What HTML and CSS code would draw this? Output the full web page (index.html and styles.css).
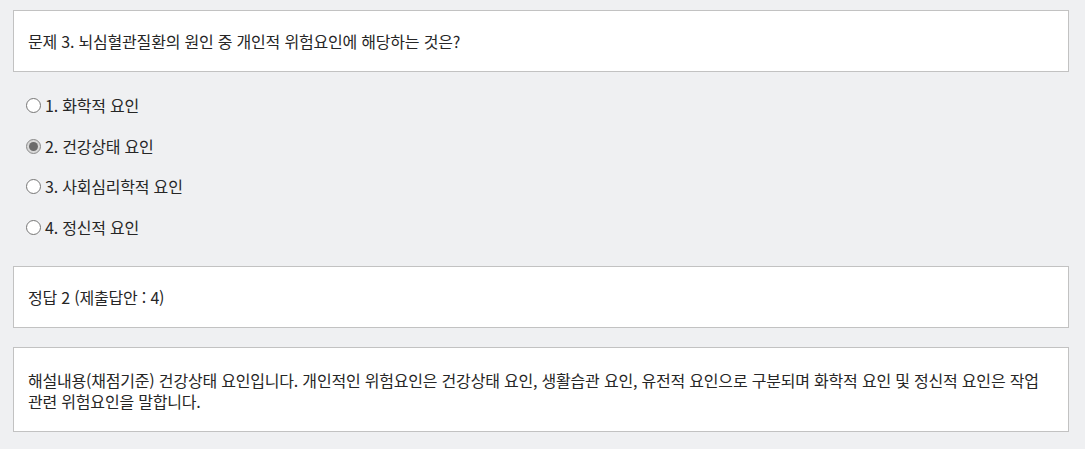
FILE: index.html
```html
<!DOCTYPE html>
<html lang="ko">

<head>
    <meta charset="UTF-8">
    <meta name="viewport" content="width=device-width, initial-scale=1.0">
    <title>문제 풀이 결과</title>
    <link rel="stylesheet" href="styles.css">
</head>

<body>
    <div class="quiz">
        <div class="box question">문제 3. 뇌심혈관질환의 원인 중 개인적 위험요인에 해당하는 것은?</div>

        <ul class="choices">
            <li class="choice"><span class="radio"></span>1. 화학적 요인</li>
            <li class="choice"><span class="radio checked"></span>2. 건강상태 요인</li>
            <li class="choice"><span class="radio"></span>3. 사회심리학적 요인</li>
            <li class="choice"><span class="radio"></span>4. 정신적 요인</li>
        </ul>

        <div class="box answer">정답 2 (제출답안 : 4)</div>

        <div class="box explain">해설내용(채점기준) 건강상태 요인입니다. 개인적인 위험요인은 건강상태 요인, 생활습관 요인, 유전적 요인으로 구분되며 화학적 요인 및 정신적 요인은 작업 관련 위험요인을 말합니다.</div>
    </div>
</body>

</html>
```

FILE: styles.css
```css
* {
    margin: 0;
    padding: 0;
    box-sizing: border-box;
}

body {
    background-color: #eff0f2;
    font-family: 'Noto Sans CJK KR', 'Noto Sans', sans-serif;
    font-size: 16px;
    color: #262626;
    letter-spacing: -0.2px;
}

.quiz {
    padding: 10px 16px 0 13px;
}

.box {
    background-color: #fff;
    border: 1px solid #c2c2c2;
    padding: 0 14px;
    line-height: 21px;
}

.question {
    padding-top: 20px;
    padding-bottom: 19px;
}

.choices {
    list-style: none;
    padding: 23px 0 28px 13px;
    display: flex;
    flex-direction: column;
    gap: 19.5px;
}

.choice {
    display: flex;
    align-items: center;
    gap: 4px;
    line-height: 21px;
}

.radio {
    width: 15px;
    height: 15px;
    border: 1px solid #767676;
    border-radius: 50%;
    background-color: #fff;
    display: flex;
    align-items: center;
    justify-content: center;
}

.radio.checked {
    border-color: #8a8a8a;
    background-color: #d8d8d8;
}

.radio.checked::after {
    content: '';
    width: 9px;
    height: 9px;
    border-radius: 50%;
    background-color: #6b6b6b;
}

.answer {
    padding-top: 20px;
    padding-bottom: 19px;
}

.explain {
    margin-top: 19px;
    padding-top: 22px;
    padding-bottom: 19px;
}
```
